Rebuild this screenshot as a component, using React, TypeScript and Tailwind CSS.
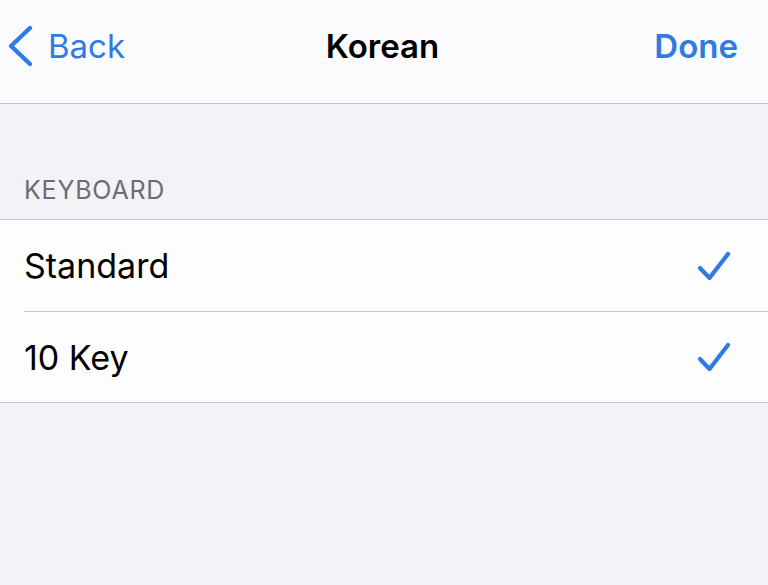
const rows = ["Standard", "10 Key"];

const Chevron = () => (
    <svg width="30" height="44" viewBox="0 0 30 44" fill="none">
        <path d="M25 4 L6 22 L25 40" stroke="#2f7ae5" strokeWidth="4.4" strokeLinecap="round" strokeLinejoin="round" />
    </svg>
);

const Check = () => (
    <svg width="36" height="34" viewBox="0 0 36 34" fill="none">
        <path d="M4 19 L13.5 29 L32 5" stroke="#2f7ae5" strokeWidth="4.2" strokeLinecap="round" strokeLinejoin="round" />
    </svg>
);

const App = () => {
    return (
        <div className="w-[768px] h-[585px] bg-[#f2f2f7] font-['Inter',sans-serif] overflow-hidden">
            <div className="h-[104px] bg-[#fbfbfd] border-b border-[#c6c6c8] grid grid-cols-[1fr_auto_1fr] items-start pt-[24px]">
                <div className="flex items-center text-[#2f7ae5] pl-[5px]">
                    <Chevron />
                    <span className="text-[33px] leading-[40px] ml-[13px]">Back</span>
                </div>
                <h1 className="text-[33px] leading-[40px] font-semibold text-black pt-[2px] -ml-[3px]">Korean</h1>
                <div className="flex justify-end pr-[30px] pt-[2px]">
                    <span className="text-[33px] leading-[40px] font-semibold text-[#2f7ae5]">Done</span>
                </div>
            </div>

            <div className="pt-[71px] pb-[14px] px-[24px] text-[25px] leading-[30px] text-[#6d6d72] tracking-[0.8px]">
                KEYBOARD
            </div>

            <div className="bg-[#fdfdfe] border-y border-[#c6c6c8]">
                {rows.map((label, i) => (
                    <div key={label} className="pl-[24px]">
                        <div className={`h-[91px] flex items-center justify-between pr-[36px] ${i > 0 ? "border-t border-[#c6c6c8]" : ""}`}>
                            <span className="text-[34px] text-black">{label}</span>
                            <Check />
                        </div>
                    </div>
                ))}
            </div>
        </div>
    );
};

export default App;
